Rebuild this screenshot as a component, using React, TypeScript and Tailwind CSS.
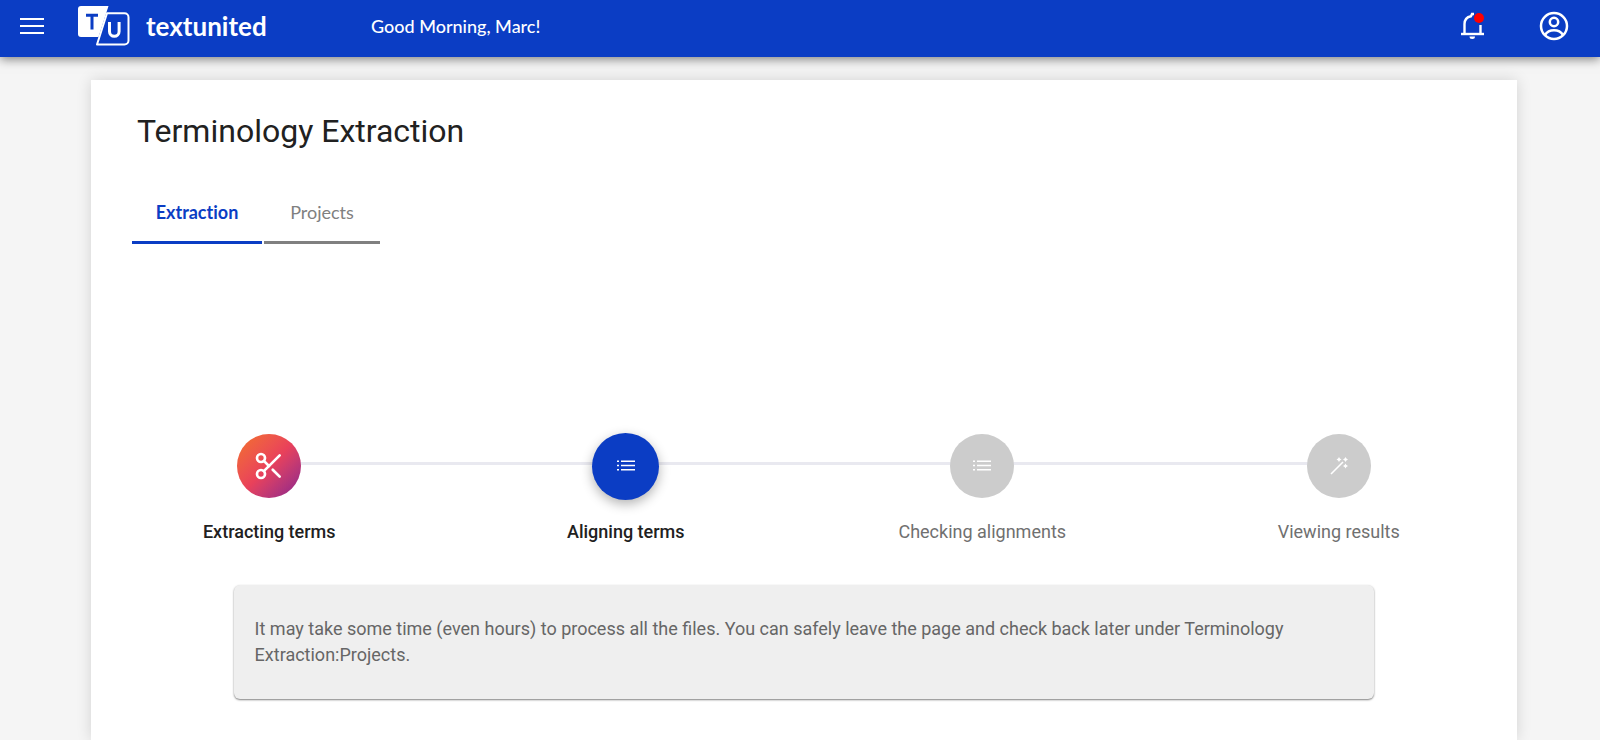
import React from 'react';
import { Scissors } from 'lucide-react';

/* ── Types ─────────────────────────────────────────── */

type StepState = 'done' | 'active' | 'pending';

interface Step {
  label: string;
  state: StepState;
  icon: React.ReactNode;
}

/* ── Icons ─────────────────────────────────────────── */

function Logo() {
  return (
    <svg width="52" height="40" viewBox="0 0 52 40" fill="none" aria-hidden="true">
      <path d="M3 0H30.500L20.500 31H3a3 3 0 0 1-3-3V3a3 3 0 0 1 3-3Z" fill="#fff" />
      <path d="M8 9.200h12M14 9v14.500" stroke="#0b3dc4" strokeWidth="3" />
      <path d="M29 7.300H46.500a4 4 0 0 1 4 4V34.500a4 4 0 0 1-4 4H19Z" stroke="#fff" strokeWidth="2" strokeLinejoin="round" />
      <path d="M31.500 16v9.500a4.800 4.800 0 0 0 9.600 0V16" stroke="#fff" strokeWidth="3" />
    </svg>
  );
}

function BellIcon() {
  return (
    <svg width="26" height="28" viewBox="0 0 26 28" fill="none" stroke="#fff" strokeWidth="2.400" aria-hidden="true">
      <path d="M1 22h23" />
      <path d="M4.500 22V12C4.500 8 7 5 11 4.200L12 2h2" />
      <path d="M20.500 22V13" />
      <path d="M9.500 24.500h5.500a2.750 2.500 0 0 1-5.500 0Z" fill="#fff" stroke="none" />
    </svg>
  );
}

function AccountIcon() {
  return (
    <svg width="30" height="30" viewBox="0 0 30 30" fill="none" stroke="#fff" strokeWidth="2.500" aria-hidden="true">
      <circle cx="15" cy="15" r="13" />
      <circle cx="15" cy="11" r="4.200" />
      <path d="M6 24c2-3.200 5.500-4.700 9-4.700s7 1.500 9 4.700" />
    </svg>
  );
}

function ListIcon() {
  return (
    <svg width="18" height="12" viewBox="0 0 18 12" fill="#fff" aria-hidden="true">
      <path d="M0 .6h2V2H0zM0 4.800h2v1.400H0zM0 9h2v1.400H0zM4 .6h14V2H4zM4 4.800h14v1.400H4zM4 9h14v1.400H4z" />
    </svg>
  );
}

function WandIcon() {
  return (
    <svg width="18" height="18" viewBox="0 0 18 18" fill="#fff" aria-hidden="true">
      <path d="M1 17 13 5" stroke="#fff" strokeWidth="1.600" />
      <path d="m9 0 .9 1.600 1.600.9-1.600.9L9 5l-.9-1.600-1.600-.9 1.600-.9z" />
      <path d="m15.500 0 .9 1.600 1.600.9-1.600.9-.9 1.600-.9-1.600-1.600-.9 1.600-.9z" />
      <path d="m15.500 6.500.9 1.600 1.600.9-1.600.9-.9 1.600-.9-1.600-1.600-.9 1.600-.9z" />
    </svg>
  );
}

/* ── Data ──────────────────────────────────────────── */

const STEPS: Step[] = [
  { label: 'Extracting terms', state: 'done', icon: <Scissors size={32} strokeWidth={2} /> },
  { label: 'Aligning terms', state: 'active', icon: <ListIcon /> },
  { label: 'Checking alignments', state: 'pending', icon: <ListIcon /> },
  { label: 'Viewing results', state: 'pending', icon: <WandIcon /> },
];

const CIRCLE: Record<StepState, string> = {
  done: 'size-16 bg-linear-135 from-[#f37121] via-[#e9415a] to-[#8a1f8c]',
  active: 'size-[67px] bg-[#0b3dc4] shadow-[0_4px_12px_rgba(0,0,0,0.3)]',
  pending: 'size-16 bg-[#cccccc]',
};

/* ── Sections ──────────────────────────────────────── */

function Header() {
  return (
    <header className="relative z-10 flex h-[57px] items-center bg-[#0b3dc4] pr-[31px] pb-[5px] pl-5 text-white shadow-[0_2px_10px_rgba(0,0,0,0.5)]">
      <button type="button" aria-label="Menu" className="flex w-6 flex-col gap-[5px]">
        <span className="h-[2px] bg-white" />
        <span className="h-[2px] bg-white" />
        <span className="h-[2px] bg-white" />
      </button>
      <a href="#" className="ml-[34px] flex w-[293px] items-center gap-4">
        <Logo />
        <span className="font-[Lato,sans-serif] text-[26px] leading-8 font-bold">textunited</span>
      </a>
      <p className="font-[Lato,sans-serif] text-lg font-medium">Good Morning, Marc!</p>
      <div className="ml-auto flex items-center gap-[53px]">
        <button type="button" aria-label="Notifications" className="relative">
          <BellIcon />
          <span className="absolute top-px right-0.5 size-[10px] rounded-full bg-[#ff0000]" />
        </button>
        <button type="button" aria-label="Account">
          <AccountIcon />
        </button>
      </div>
    </header>
  );
}

function Tabs() {
  return (
    <div role="tablist" className="mt-8 ml-[41px] flex gap-[2px] font-[Lato,sans-serif] text-lg">
      <button type="button" role="tab" aria-selected="true" className="h-[61px] min-w-[130px] border-b-3 border-[#0b3dc4] px-5 font-bold text-[#0b3dc4] [font-variant-ligatures:none]">
        Extraction
      </button>
      <button type="button" role="tab" aria-selected="false" className="h-[61px] min-w-[116px] border-b-3 border-[#808080] px-5 text-[#808080]">
        Projects
      </button>
    </div>
  );
}

function Stepper() {
  return (
    <ol className="mt-[188px] grid grid-cols-4">
      {STEPS.map((step, i) => (
        <li key={step.label} className="relative flex flex-col items-center">
          {i < STEPS.length - 1 && <span className="absolute top-[30px] left-1/2 h-[3px] w-full bg-[#e9e9f0]" />}
          <div className="relative flex h-[68px] items-center">
            <span className={`flex items-center justify-center rounded-full text-white ${CIRCLE[step.state]}`}>{step.icon}</span>
          </div>
          <span className={step.state === 'pending' ? 'mt-[18px] text-lg text-[#707070]' : 'mt-[18px] text-lg font-medium text-[#212121]'}>
            {step.label}
          </span>
        </li>
      ))}
    </ol>
  );
}

/* ── Page ──────────────────────────────────────────── */

export default function App() {
  return (
    <div className="flex h-screen flex-col overflow-hidden bg-[#f5f5f5] font-[Roboto,sans-serif]">
      <Header />
      <main className="mt-[23px] mr-[83px] ml-[91px] grow bg-white shadow-[0_0_14px_rgba(0,0,0,0.14)]">
        <h1 className="ml-[46px] pt-[31px] text-[32px] leading-10 text-[#212121]">Terminology Extraction</h1>
        <Tabs />
        <Stepper />
        <section className="mx-auto mt-[39px] w-4/5 rounded-md bg-[#efefef] px-[21px] py-[31px] shadow-[0_1px_2px_rgba(0,0,0,0.5)]">
          <p className="text-lg leading-[26px] text-[#666666]">
            It may take some time (even hours) to process all the files. You can safely leave the page and check back later under Terminology Extraction:Projects.
          </p>
        </section>
      </main>
    </div>
  );
}
